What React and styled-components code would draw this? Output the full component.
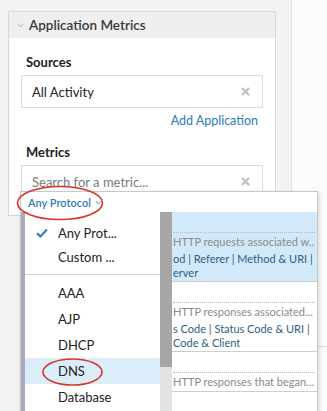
import React from 'react'
import styled, { createGlobalStyle } from 'styled-components'

const GlobalStyle = createGlobalStyle`
  html, body { margin: 0; padding: 0; }
  body {
    font-family: Lato, 'Liberation Sans', sans-serif;
    background: #fcfcfc;
    color: #222;
  }
`

const Page = styled.div`
  position: relative;
  display: flex;
  width: 327px;
  height: 411px;
  overflow: hidden;
  background: #fcfcfc;
`

const Sidebar = styled.aside`
  flex: none;
  width: 292px;
  box-sizing: border-box;
  padding: 11px 0 0 8px;
  background: #f3f3f3;
  border-right: 1px solid #e0e0e0;
`

const Main = styled.main`
  flex: 1;
  padding-top: 346px;
`

const Rule = styled.div`
  height: 1px;
  background: #dedede;
`

const Card = styled.section`
  width: 268px;
  box-sizing: border-box;
  border: 1px solid #d8d8d8;
  background: #fff;
`

const CardHeader = styled.header`
  display: flex;
  align-items: center;
  gap: 5px;
  height: 26px;
  padding-left: 8px;
  background: #efefef;
  font-size: 13.5px;
  font-weight: 600;
  color: #3a3a3a;
`

const CardBody = styled.div`
  padding: 15px 12px 17px;
`

const Label = styled.div`
  margin: ${(p) => p.$top || 0}px 0 4px 5px;
  font-size: 13px;
  font-weight: 700;
  line-height: 18px;
  color: #222;
`

const Field = styled.div`
  display: flex;
  align-items: center;
  justify-content: space-between;
  height: 33px;
  box-sizing: border-box;
  padding: 0 12px 0 10px;
  border: 1px solid #dcdcdc;
  font-size: 13px;
  color: ${(p) => (p.$placeholder ? '#7a7a7a' : '#222')};
`

const AddLink = styled.div`
  margin-top: 4px;
  padding-right: 5px;
  text-align: right;
  font-size: 12.5px;
  line-height: 18px;
  color: #2d7bb0;
`

const Dropdown = styled.div`
  position: absolute;
  left: 20px;
  top: 191px;
  bottom: -2px;
  width: 298px;
  box-sizing: border-box;
  display: flex;
  flex-direction: column;
  background: #fff;
  border: 1px solid #c8c8c8;
  box-shadow: 1px 2px 5px rgba(0, 0, 0, 0.18);
`

const DropHeader = styled.div`
  display: flex;
  align-items: center;
  gap: 4px;
  height: 20px;
  padding-left: 7px;
  font-size: 11px;
  font-weight: 600;
  color: #2f7bb3;
`

const DropBody = styled.div`
  flex: 1;
  display: flex;
  min-height: 0;
`

const Menu = styled.ul`
  flex: none;
  width: 135px;
  margin: 0;
  padding: 9px 0 0;
  list-style: none;
  border-left: 4px solid #aaa9bf;
  background: #fff;
`

const MenuItem = styled.li`
  display: flex;
  align-items: center;
  height: ${(p) => p.$h || 26}px;
  padding-left: 11px;
  font-size: 13px;
  color: #222;
  background: ${(p) => (p.$active ? '#dcedfa' : 'transparent')};
`

const Check = styled.span`
  display: inline-flex;
  width: 22px;
`

const Divider = styled.li`
  height: 1px;
  margin: 5px 0;
  background: #d4d4d4;
`

const Scrollbar = styled.div`
  flex: none;
  width: 12px;
  background: #e3e3e3;
`

const Thumb = styled.div`
  height: 155px;
  background: #a6a6a6;
`

const Results = styled.div`
  flex: 1;
  overflow: hidden;
`

const Result = styled.div`
  padding: 20px 2px 1px 1px;
  background: ${(p) => (p.$active ? '#d2e9fa' : '#fff')};
  border-bottom: 1px solid #cdcdcd;
`

const Details = styled.div`
  padding-top: 1px;
  border-top: 1px dotted #b8b8b8;
  white-space: nowrap;
`

const Desc = styled.div`
  font-size: 11px;
  line-height: 16px;
  color: #8a8a8a;
`

const Links = styled.div`
  margin-top: 2px;
  font-size: 11px;
  line-height: 14px;
  color: #2f5e80;

  & + & {
    margin-top: 0;
  }
`

const Marks = styled.svg`
  position: absolute;
  left: 0;
  top: 0;
  pointer-events: none;
`

const Chevron = ({ color = '#c2c2c2', size = 7 }) => (
  <svg width={size} height={size} viewBox="0 0 8 8">
    <path d="M1 2.5 L4 5.5 L7 2.5" fill="none" stroke={color} strokeWidth="1.2" />
  </svg>
)

const Clear = () => (
  <svg width="9" height="9" viewBox="0 0 9 9">
    <path d="M1.5 1.5 L7.5 7.5 M7.5 1.5 L1.5 7.5" stroke="#bdbdbd" strokeWidth="2" strokeLinecap="round" />
  </svg>
)

const CheckMark = () => (
  <svg width="12" height="10" viewBox="0 0 12 10">
    <path d="M1 5.2 L4.3 8.4 L11 1.4" fill="none" stroke="#2f80c2" strokeWidth="2.2" />
  </svg>
)

const protocols = ['AAA', 'AJP', 'DHCP', 'DNS', 'Database']

const results = [
  { active: true, desc: 'HTTP requests associated w..', links: ['od | Referer | Method & URI |', 'erver'] },
  { desc: 'HTTP responses associated...', links: ['s Code | Status Code & URI |', 'Code & Client'] },
  { desc: 'HTTP responses that began...', links: [] }
]

const App = () => {
  return (
    <>
      <GlobalStyle />
      <Page>
        <Sidebar>
          <Card>
            <CardHeader>
              <Chevron />
              Application Metrics
            </CardHeader>
            <CardBody>
              <Label>Sources</Label>
              <Field>
                All Activity
                <Clear />
              </Field>
              <AddLink>Add Application</AddLink>
              <Label $top={13}>Metrics</Label>
              <Field $placeholder>
                Search for a metric...
                <Clear />
              </Field>
            </CardBody>
          </Card>
        </Sidebar>
        <Main>
          <Rule />
        </Main>

        <Dropdown>
          <DropHeader>
            Any Protocol
            <Chevron color="#8aaac4" size={7} />
          </DropHeader>
          <DropBody>
            <Menu>
              <MenuItem $h={24}>
                <Check>
                  <CheckMark />
                </Check>
                Any Prot...
              </MenuItem>
              <MenuItem $h={24}>
                <Check />
                Custom ...
              </MenuItem>
              <Divider />
              {protocols.map((name) => (
                <MenuItem key={name} $active={name === 'DNS'}>
                  <Check />
                  {name}
                </MenuItem>
              ))}
            </Menu>
            <Scrollbar>
              <Thumb />
            </Scrollbar>
            <Results>
              {results.map((item, index) => (
                <Result key={index} $active={item.active}>
                  <Details>
                    <Desc>{item.desc}</Desc>
                    {item.links.map((line) => (
                      <Links key={line}>{line}</Links>
                    ))}
                  </Details>
                </Result>
              ))}
            </Results>
          </DropBody>
        </Dropdown>

        <Marks width="327" height="411">
          <ellipse cx="60" cy="203" rx="42.5" ry="16.5" fill="none" stroke="#d6372b" strokeWidth="1.6" />
          <ellipse cx="72.5" cy="372" rx="29.5" ry="13" fill="none" stroke="#d6372b" strokeWidth="1.6" />
        </Marks>
      </Page>
    </>
  )
}

export default App
